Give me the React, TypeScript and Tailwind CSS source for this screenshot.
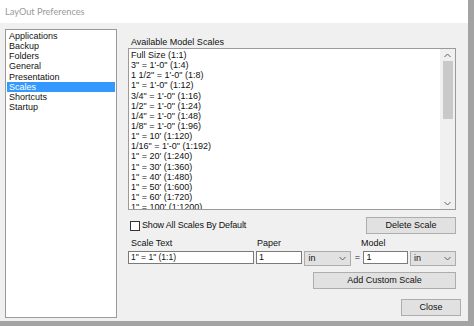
import React from "react";

const SECTIONS = [
  "Applications",
  "Backup",
  "Folders",
  "General",
  "Presentation",
  "Scales",
  "Shortcuts",
  "Startup",
];

const SCALES = [
  "Full Size (1:1)",
  '3" = 1\'-0" (1:4)',
  '1 1/2" = 1\'-0" (1:8)',
  '1" = 1\'-0" (1:12)',
  '3/4" = 1\'-0" (1:16)',
  '1/2" = 1\'-0" (1:24)',
  '1/4" = 1\'-0" (1:48)',
  '1/8" = 1\'-0" (1:96)',
  "1\" = 10' (1:120)",
  '1/16" = 1\'-0" (1:192)',
  "1\" = 20' (1:240)",
  "1\" = 30' (1:360)",
  "1\" = 40' (1:480)",
  "1\" = 50' (1:600)",
  "1\" = 60' (1:720)",
  "1\" = 100' (1:1200)",
];

function Chevron({ up = false }: { up?: boolean }) {
  return (
    <svg width="7" height="5" viewBox="0 0 7 5" className="shrink-0">
      <path
        d={up ? "M0.5 4 L3.5 1 L6.5 4" : "M0.5 1 L3.5 4 L6.5 1"}
        fill="none"
        stroke="#606060"
        strokeWidth="1"
      />
    </svg>
  );
}

function UnitSelect({ w }: { w: string }) {
  return (
    <div
      className={`${w} h-[15px] flex items-center justify-between pl-[3px] pr-[4px] bg-[#e1e1e1] border border-[#acacac]`}
    >
      <span>in</span>
      <Chevron />
    </div>
  );
}

function Button({ label, w }: { label: string; w: string }) {
  return (
    <div
      className={`${w} h-[17px] flex items-center justify-center bg-[#e1e1e1] border border-[#adadad]`}
    >
      {label}
    </div>
  );
}

export default function App() {
  return (
    <div
      className="w-[474px] h-[326px] bg-[#a3a3a3] overflow-hidden text-[9px] text-[#111]"
      style={{ fontFamily: '"Liberation Sans", Arial, sans-serif' }}
    >
      <div className="w-[468px] h-[321px] bg-[#f0f0f0] flex flex-col">
        <div className="h-[23px] bg-white flex items-center pl-[5px] pt-[1px] shrink-0">
          <span
            className="text-[9.2px] text-[#9a9a9a]"
            style={{ fontFamily: "Lato, sans-serif" }}
          >
            LayOut Preferences
          </span>
        </div>

        <div className="flex">
          {/* category list */}
          <div className="ml-[5px] mt-[6px] w-[112px] h-[289px] bg-white border border-[#9a9a9a] pt-[1px] px-[1px] leading-[10.15px]">
            {SECTIONS.map((s) => (
              <div
                key={s}
                className={
                  s === "Scales"
                    ? "h-[10.15px] pl-[2px] bg-[#3399ff] text-white"
                    : "h-[10.15px] pl-[2px]"
                }
              >
                {s}
              </div>
            ))}
          </div>

          {/* scales panel */}
          <div className="ml-[11px] w-[328px] pt-[14px] flex flex-col">
            <div className="h-[10px] leading-[10px] pl-[3px]">Available Model Scales</div>

            <div className="mt-[1px] h-[162px] bg-white border border-[#9a9a9a] flex overflow-hidden">
              <div className="flex-1 pt-[1px] pl-[2px] leading-[10.15px] overflow-hidden">
                {SCALES.map((s) => (
                  <div key={s} className="h-[10.15px] whitespace-nowrap">
                    {s}
                  </div>
                ))}
              </div>
              <div className="w-[15px] bg-[#f0f0f0] flex flex-col items-center">
                <div className="h-[12px] flex items-center justify-center">
                  <Chevron up />
                </div>
                <div className="w-[10px] h-[58px] bg-[#c9c9c9]" />
                <div className="flex-1" />
                <div className="h-[12px] flex items-center justify-center">
                  <Chevron />
                </div>
              </div>
            </div>

            <div className="mt-[7px] h-[17px] flex items-center justify-between">
              <div className="flex items-center">
                <div className="ml-[2px] w-[10px] h-[10px] bg-white border border-[#333]" />
                <span className="ml-[2px] tracking-[-0.15px]">Show All Scales By Default</span>
              </div>
              <Button label="Delete Scale" w="w-[90px]" />
            </div>

            <div className="mt-[4px] h-[10px] leading-[10px] flex">
              <span className="w-[129px] pl-[3px]">Scale Text</span>
              <span className="w-[104px]">Paper</span>
              <span>Model</span>
            </div>

            <div className="mt-[3px] h-[15px] flex items-start">
              <div className="w-[127px] h-[13px] bg-white border border-[#7a7a7a] pl-[2px] leading-[11px] text-[8.5px]">
                1" = 1" (1:1)
              </div>
              <div className="ml-[2px] w-[47px] h-[13px] bg-white border border-[#7a7a7a] pl-[2px] leading-[11px]">
                1
              </div>
              <div className="ml-[2px]">
                <UnitSelect w="w-[47px]" />
              </div>
              <span className="w-[12px] text-center leading-[13px]">=</span>
              <div className="w-[45px] h-[13px] bg-white border border-[#7a7a7a] pl-[2px] leading-[11px]">
                1
              </div>
              <div className="ml-[2px]">
                <UnitSelect w="w-[46px]" />
              </div>
            </div>

            <div className="mt-[6px] self-end">
              <Button label="Add Custom Scale" w="w-[143px]" />
            </div>

            <div className="mt-[10px] self-end -mr-[5px]">
              <Button label="Close" w="w-[60px]" />
            </div>
          </div>
        </div>
      </div>
    </div>
  );
}
